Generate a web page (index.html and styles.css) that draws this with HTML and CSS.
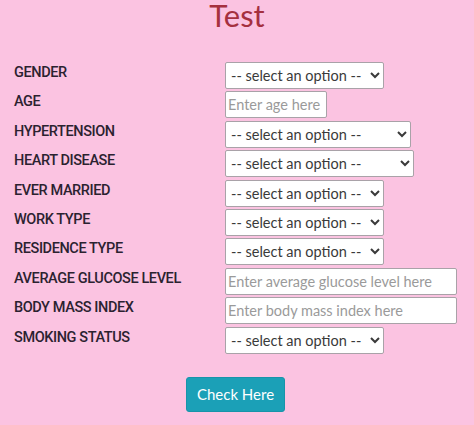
FILE: index.html
```html
<!DOCTYPE html>
<html lang="en">
<head>
    <meta charset="UTF-8">
    <meta name="viewport" content="width=device-width, initial-scale=1.0">
    <title>Stroke Prediction</title>
    <link rel="stylesheet" href="styles.css">
</head>
<body>
    <div class="container">
        <h1 class="title">Test</h1>
        <form class="form" id="predict-form" action="/predict" method="post">
            <label for="gender">GENDER</label>
            <select id="gender" name="gender" class="short">
                <option value="" selected disabled>-- select an option --</option>
                <option value="male">Male</option>
                <option value="female">Female</option>
            </select>

            <label for="age">AGE</label>
            <input type="text" id="age" name="age" class="age" placeholder="Enter age here">

            <label for="hypertension">HYPERTENSION</label>
            <select id="hypertension" name="hypertension" class="wide">
                <option value="" selected disabled>-- select an option --</option>
                <option value="0">No</option>
                <option value="1">Yes</option>
            </select>

            <label for="heart">HEART DISEASE</label>
            <select id="heart" name="heart" class="wider">
                <option value="" selected disabled>-- select an option --</option>
                <option value="0">No</option>
                <option value="1">Yes</option>
            </select>

            <label for="married">EVER MARRIED</label>
            <select id="married" name="married" class="short">
                <option value="" selected disabled>-- select an option --</option>
                <option value="no">No</option>
                <option value="yes">Yes</option>
            </select>

            <label for="work">WORK TYPE</label>
            <select id="work" name="work" class="short">
                <option value="" selected disabled>-- select an option --</option>
                <option value="private">Private</option>
                <option value="self">Self-employed</option>
                <option value="govt">Govt job</option>
                <option value="children">Children</option>
            </select>

            <label for="residence">RESIDENCE TYPE</label>
            <select id="residence" name="residence" class="short">
                <option value="" selected disabled>-- select an option --</option>
                <option value="urban">Urban</option>
                <option value="rural">Rural</option>
            </select>

            <label for="glucose">AVERAGE GLUCOSE LEVEL</label>
            <input type="text" id="glucose" name="glucose" class="long" placeholder="Enter average glucose level here">

            <label for="bmi">BODY MASS INDEX</label>
            <input type="text" id="bmi" name="bmi" class="long" placeholder="Enter body mass index here">

            <label for="smoking">SMOKING STATUS</label>
            <select id="smoking" name="smoking" class="short">
                <option value="" selected disabled>-- select an option --</option>
                <option value="never">Never smoked</option>
                <option value="formerly">Formerly smoked</option>
                <option value="smokes">Smokes</option>
            </select>
        </form>
        <div class="actions">
            <button class="check" type="submit" form="predict-form">Check Here</button>
        </div>
    </div>
</body>
</html>
```

FILE: styles.css
```css
body {
    font-family: 'Lato', sans-serif;
    margin: 0;
    padding: 0;
    background-color: #fbc3e1;
}

.container {
    padding: 0 14px;
}

.title {
    margin: -3px 0 0;
    text-align: center;
    font-size: 31px;
    font-weight: 400;
    line-height: 36px;
    color: #a5303f;
}

.form {
    display: grid;
    grid-template-columns: 211px auto;
    grid-auto-rows: 27px;
    row-gap: 2.4px;
    margin-top: 29px;
    justify-items: start;
}

.form label {
    font-family: 'Roboto', sans-serif;
    font-size: 14.5px;
    font-weight: 500;
    letter-spacing: -0.4px;
    color: #2b2230;
    line-height: 18px;
    padding-top: 2px;
}

.form select, .form input {
    height: 27px;
    box-sizing: border-box;
    border: 1px solid #a9a2a8;
    border-radius: 2px;
    background-color: #fff;
    font-family: 'Lato', sans-serif;
    font-size: 14.5px;
    color: #3a3a3a;
    margin: 0;
}

.form select {
    padding: 0 1px;
}

.form input {
    padding: 0 2px;
}

.form input::placeholder {
    color: #9a9a9a;
}

.short { width: 159px; }
.wide { width: 186px; }
.wider { width: 189px; }
.age { width: 102px; }
.long { width: 232px; }

.actions {
    display: flex;
    justify-content: center;
    margin-top: 23px;
    padding-right: 3px;
}

.check {
    background-color: #1ba0b7;
    color: #fff;
    border: 1px solid #1794aa;
    border-radius: 3px;
    width: 99px;
    height: 35px;
    font-family: 'Lato', sans-serif;
    font-size: 15px;
    cursor: pointer;
}

.check:hover {
    background-color: #168a9e;
}
```
